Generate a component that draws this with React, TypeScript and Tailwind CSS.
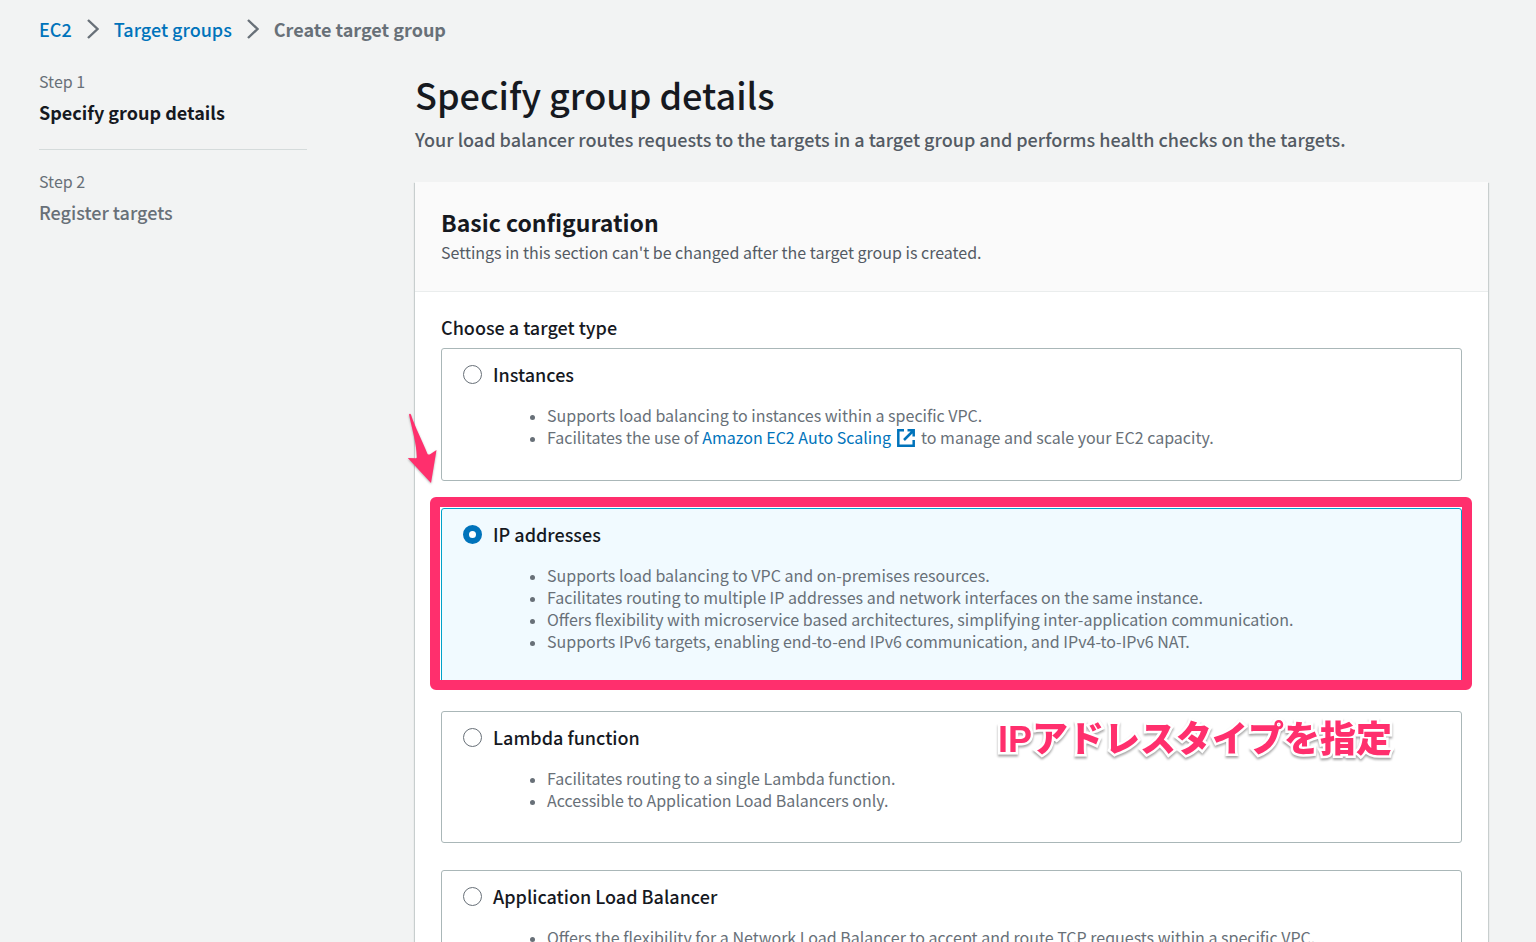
import { ReactNode, useState } from 'react';

// ── Types ─────────────────────────────────────────────────────────────────────

interface TargetType {
  id: string;
  title: string;
  points: ReactNode[];
}

// ── Icons ─────────────────────────────────────────────────────────────────────

function ChevronIcon() {
  return (
    <svg className="h-5 w-3 shrink-0" viewBox="0 0 12 20" fill="none" stroke="#687078" strokeWidth="2.4" aria-hidden="true">
      <path d="M1 1l9.500 9L1 19" />
    </svg>
  );
}

function ExternalIcon() {
  return (
    <svg className="mr-[5px] ml-[5px] inline h-5 w-5 align-text-bottom" viewBox="0 0 20 20" fill="none" stroke="#0073bb" strokeWidth="2.500" aria-hidden="true">
      <path d="M8 1.300H2.300v15.400h15.400V11" />
      <path d="M11.500 1.300h6.200V7.500M17.500 1.500L8 11" />
    </svg>
  );
}

function ArrowMark() {
  return (
    <svg className="absolute -top-24 -left-[35px] h-[72px] w-8 drop-shadow-[0_1px_1px_rgba(0,0,0,0.3)]" viewBox="0 0 32 72" fill="#ff2f6d" aria-hidden="true">
      <path d="M2 1.500c.6-1 1.600-.8 2 .2C8 14 15 27 20.500 41c1 1 2 .6 3 0l6-4-5.500 33L.8 45l8.200.2c.6 0 1-.4 .8-1.200C9.500 30 5 16 2 1.500z" />
    </svg>
  );
}

// ── Data ──────────────────────────────────────────────────────────────────────

const TARGET_TYPES: TargetType[] = [
  {
    id: 'instances',
    title: 'Instances',
    points: [
      'Supports load balancing to instances within a specific VPC.',
      <>
        Facilitates the use of{' '}
        <a href="#auto-scaling" className="text-[#0073bb]">
          Amazon EC2 Auto Scaling
          <ExternalIcon />
        </a>
        to manage and scale your EC2 capacity.
      </>,
    ],
  },
  {
    id: 'ip',
    title: 'IP addresses',
    points: [
      'Supports load balancing to VPC and on-premises resources.',
      'Facilitates routing to multiple IP addresses and network interfaces on the same instance.',
      'Offers flexibility with microservice based architectures, simplifying inter-application communication.',
      'Supports IPv6 targets, enabling end-to-end IPv6 communication, and IPv4-to-IPv6 NAT.',
    ],
  },
  {
    id: 'lambda',
    title: 'Lambda function',
    points: [
      'Facilitates routing to a single Lambda function.',
      'Accessible to Application Load Balancers only.',
    ],
  },
  {
    id: 'alb',
    title: 'Application Load Balancer',
    points: [
      'Offers the flexibility for a Network Load Balancer to accept and route TCP requests within a specific VPC.',
    ],
  },
];

// ── Target type card ──────────────────────────────────────────────────────────

interface CardProps {
  type: TargetType;
  selected: boolean;
  onSelect: () => void;
}

function TargetCard({ type, selected, onSelect }: CardProps) {
  return (
    <div
      className={`relative rounded-[3px] border px-[21px] pt-[11px] pb-[31px] ${
        selected ? 'border-[#00a1c9] bg-[#f1faff]' : 'border-[#aab7b8] bg-white'
      }`}
    >
      <label className="flex items-center gap-[11px] text-[18px] leading-7 font-medium text-[#16191f]">
        <input
          type="radio"
          name="target-type"
          checked={selected}
          onChange={onSelect}
          className="size-[19px] shrink-0 appearance-none rounded-full border border-[#687078] bg-white checked:border-[6px] checked:border-[#0073bb]"
        />
        {type.title}
      </label>
      <ul className="mt-4 list-disc pl-[84px] text-[16px] leading-[22px] text-[#687078] marker:text-[14px]">
        {type.points.map((point, i) => (
          <li key={i}>{point}</li>
        ))}
      </ul>

      {/* Annotations drawn over the form */}
      {type.id === 'ip' && (
        <>
          <div className="pointer-events-none absolute -top-3 -right-[11px] -bottom-[7px] -left-3 rounded-md border-[10px] border-[#ff2f6d]" />
          <ArrowMark />
        </>
      )}
      {type.id === 'lambda' && (
        <p className="absolute top-0.5 right-[69px] font-['Liberation_Sans','Noto_Sans_CJK_JP',sans-serif] text-[36px] leading-[52px] font-black whitespace-nowrap text-[#ff2f6d] drop-shadow-[0_2px_1px_rgba(0,0,0,0.35)] [-webkit-text-stroke:5px_white] [paint-order:stroke_fill]">
          IPアドレスタイプを指定
        </p>
      )}
    </div>
  );
}

// ── Main Component ────────────────────────────────────────────────────────────

export default function App() {
  const [selected, setSelected] = useState('ip');

  return (
    <div className="h-screen overflow-hidden bg-[#f2f3f3] pr-12 pl-[39px] font-['Noto_Sans_CJK_JP','Noto_Sans',sans-serif] text-[#16191f]">
      <nav aria-label="Breadcrumb" className="pt-[15px]">
        <ol className="flex items-center gap-[15px] text-[18px] leading-7 font-medium">
          <li><a href="#ec2" className="text-[#0073bb]">EC2</a></li>
          <li><ChevronIcon /></li>
          <li><a href="#target-groups" className="text-[#0073bb]">Target groups</a></li>
          <li><ChevronIcon /></li>
          <li className="font-bold text-[#687078]">Create target group</li>
        </ol>
      </nav>

      <div className="mt-6 flex gap-[108px]">
        {/* ── Wizard steps ─────────────────────────────────────────────────── */}
        <ol className="w-[268px] shrink-0 text-[#687078]">
          <li className="border-b border-[#d5dbdb] pb-[23px]">
            <p className="text-[16px] leading-7">Step 1</p>
            <p className="mt-[3px] text-[18px] leading-7 font-bold text-[#16191f]">Specify group details</p>
          </li>
          <li className="pt-[17px]">
            <p className="text-[16px] leading-7">Step 2</p>
            <p className="mt-[3px] text-[18px] leading-7 font-medium">Register targets</p>
          </li>
        </ol>

        <main className="min-w-0 flex-1">
          <h1 className="text-[36px] leading-[54px] font-medium">Specify group details</h1>
          <p className="mt-1 text-[18px] leading-7 font-medium text-[#545b64]">
            Your load balancer routes requests to the targets in a target group and performs health checks on the targets.
          </p>

          <section className="mt-[29px] bg-white shadow-[-1px_1px_1px_#c8cece,1px_1px_1px_#c8cece]">
            <header className="border-b border-[#eaeded] bg-[#fafafa] px-[26px] pt-[22px] pb-7">
              <h2 className="text-[23px] leading-9 font-bold">Basic configuration</h2>
              <p className="mt-px text-[16px] leading-[22px] text-[#545b64]">
                Settings in this section can't be changed after the target group is created.
              </p>
            </header>

            <fieldset className="px-[26px] pt-[21px] pb-8">
              <legend className="float-left mb-[7px] w-full text-[18px] leading-7 font-medium">Choose a target type</legend>
              <div className="clear-both flex flex-col gap-[27px]">
                {TARGET_TYPES.map((type) => (
                  <TargetCard
                    key={type.id}
                    type={type}
                    selected={selected === type.id}
                    onSelect={() => setSelected(type.id)}
                  />
                ))}
              </div>
            </fieldset>
          </section>
        </main>
      </div>
    </div>
  );
}
